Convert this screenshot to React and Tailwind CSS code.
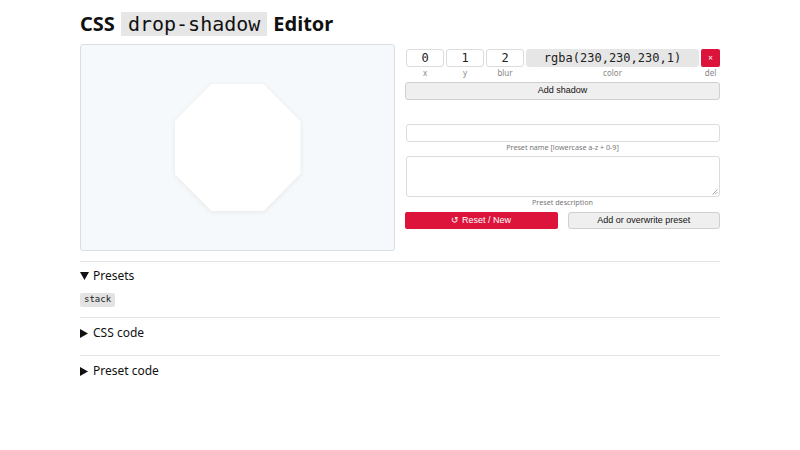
import React from "react";

const mono = "font-['DejaVu_Sans_Mono',monospace]";
const arial = "font-['Liberation_Sans',Arial,sans-serif]";

function Field({ value, className = "" }) {
  return (
    <div
      className={`h-[18px] border border-[#dcdcdc] rounded-[3px] flex items-center justify-center text-[12px] text-[#222] ${mono} ${className}`}
    >
      {value}
    </div>
  );
}

function Section({ open, title, children, className = "" }) {
  return (
    <div className={`border-t border-[#e4e4e4] ${className}`}>
      <div className="h-[16px] flex items-center text-[12px] text-[#111]">
        <span className="w-[13px] flex items-center">
          {open ? (
            <svg width="9" height="8" viewBox="0 0 9 8">
              <path d="M0 0H9L4.5 8Z" fill="#111" />
            </svg>
          ) : (
            <svg width="8" height="9" viewBox="0 0 8 9">
              <path d="M0 0L8 4.5L0 9Z" fill="#111" />
            </svg>
          )}
        </span>
        {title}
      </div>
      {children}
    </div>
  );
}

export default function App() {
  return (
    <div className="w-full min-h-[450px] bg-white font-['Noto_Sans',sans-serif]">
      <div className="w-[640px] ml-[80px]">
        <h1 className="h-[24px] mt-[12px] mb-[8px] leading-[24px] text-[20px] font-bold text-[#111] whitespace-nowrap">
          <span>CSS</span>
          <code className={`inline-block h-[24px] ml-[6px] mr-[6px] px-[7px] bg-[#e6e6e6] align-top leading-[24px] text-[20px] font-normal ${mono}`}>
            drop-shadow
          </code>
          <span>Editor</span>
        </h1>

        <div className="flex gap-[10px]">
          <div className="w-[315px] h-[207px] border border-[#d9dee3] rounded-[3px] bg-[#f5f9fc] flex items-center justify-center">
            <div className="[filter:drop-shadow(0_1px_2px_rgba(230,230,230,1))]">
              <div className="w-[126px] h-[127px] bg-white [clip-path:polygon(29.3%_0,70.7%_0,100%_29.3%,100%_70.7%,70.7%_100%,29.3%_100%,0_70.7%,0_29.3%)]" />
            </div>
          </div>

          <div className="w-[315px] pt-[5px]">
            <div className="flex gap-[2px] pl-[1px]">
              <Field value="0" className="w-[38px]" />
              <Field value="1" className="w-[38px]" />
              <Field value="2" className="w-[38px]" />
              <Field value="rgba(230,230,230,1)" className="flex-1 bg-[#e6e6e6] border-[#e6e6e6]" />
              <div className="w-[19px] h-[18px] rounded-[2px] bg-[#dc143c] flex items-center justify-center text-white text-[8px]">
                ×
              </div>
            </div>
            <div className="flex gap-[2px] pl-[1px] h-[11px] pt-[1px] items-center text-[8px] text-[#888] text-center">
              <span className="w-[38px]">x</span>
              <span className="w-[38px]">y</span>
              <span className="w-[38px]">blur</span>
              <span className="flex-1">color</span>
              <span className="w-[19px]">del</span>
            </div>
            <button
              className={`mt-[4px] w-full h-[18px] rounded-[3px] border border-[#d0d0d0] bg-[#efefef] text-[9px] text-[#111] flex items-center justify-center ${arial}`}
            >
              Add shadow
            </button>

            <div className="mt-[24px] ml-[1px] h-[18px] border border-[#dcdcdc] rounded-[3px] bg-white" />
            <div className="h-[10px] flex items-center justify-center text-[7.2px] text-[#777]">
              Preset name [lowercase a-z + 0-9]
            </div>
            <div className="mt-[4px] ml-[1px] h-[41px] border border-[#dcdcdc] rounded-[3px] bg-white relative">
              <svg className="absolute right-[1px] bottom-[1px]" width="6" height="6" viewBox="0 0 6 6">
                <path d="M5.5 0.5L0.5 5.5M5.5 3L3 5.5" stroke="#999" strokeWidth="0.8" />
              </svg>
            </div>
            <div className="h-[11px] flex items-center justify-center text-[7.2px] text-[#777]">
              Preset description
            </div>
            <div className="mt-[4px] grid grid-cols-2 gap-[10px]">
              <button
                className={`h-[17px] rounded-[2px] bg-[#dc143c] text-white text-[9px] flex items-center justify-center ${arial}`}
              >
                ↺ Reset / New
              </button>
              <button
                className={`h-[17px] rounded-[3px] border border-[#d0d0d0] bg-[#efefef] text-[9px] text-[#111] flex items-center justify-center ${arial}`}
              >
                Add or overwrite preset
              </button>
            </div>
          </div>
        </div>

        <Section open title="Presets" className="mt-[10px] pt-[6px] pb-[10px]">
          <div className="mt-[9px] flex">
            <span className={`h-[14px] px-[4px] rounded-[2px] bg-[#e3e3e3] flex items-center text-[9px] text-[#222] ${mono}`}>
              stack
            </span>
          </div>
        </Section>
        <Section title="CSS code" className="pt-[7px] pb-[14px]" />
        <Section title="Preset code" className="pt-[7px]" />
      </div>
    </div>
  );
}
